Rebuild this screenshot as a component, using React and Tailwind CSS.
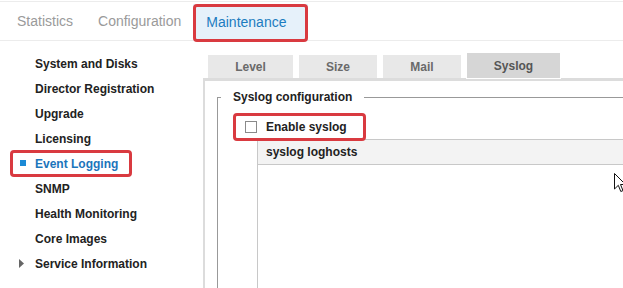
import React from "react";

const RED = "border-[#d93a40]";

const sideItems = [
  "System and Disks",
  "Director Registration",
  "Upgrade",
  "Licensing",
  "Event Logging",
  "SNMP",
  "Health Monitoring",
  "Core Images",
  "Service Information",
];

const tabs = [
  { label: "Level", w: "w-[85px]" },
  { label: "Size", w: "w-[78px]" },
  { label: "Mail", w: "w-[78px]" },
  { label: "Syslog", w: "w-[93px]", active: true },
];

export default function App() {
  return (
    <div
      className="relative w-[623px] h-[288px] overflow-hidden bg-white text-[#222]"
      style={{ fontFamily: '"Liberation Sans", Arial, sans-serif' }}
    >
      {/* top navigation */}
      <div className="mt-[1px] h-[40px] border-t border-b border-[#ececec] flex pl-[5px]">
        <div className="flex items-center px-3 text-[14px] text-[#9a9a9a]">Statistics</div>
        <div className="flex items-center pl-[13px] pr-3 text-[14px] text-[#9a9a9a]">Configuration</div>
        <div className="relative mt-[2px] flex items-center bg-[#e6f1fa] pl-[13px] pr-[22px] text-[14px] text-[#1b7cc0]">
          Maintenance
          <span className={`absolute inset-0 -bottom-[2px] rounded-[4px] border-[3px] ${RED}`} />
        </div>
      </div>

      <div className="flex">
        {/* sidebar */}
        <div className="w-[203px] shrink-0 pt-[10px]">
          {sideItems.map((it) => {
            const active = it === "Event Logging";
            const expand = it === "Service Information";
            return (
              <div key={it} className="relative h-[25px] flex items-center pl-[35px] text-[12px] font-bold">
                {active && (
                  <>
                    <span className="absolute left-[20px] top-[9px] w-[6px] h-[6px] bg-[#1c8ad6]" />
                    <span className={`absolute left-[10px] -top-[1px] w-[122px] h-[27px] rounded-[4px] border-[3px] ${RED}`} />
                  </>
                )}
                {expand && (
                  <svg className="absolute left-[19px] top-[8px]" width="5" height="9" viewBox="0 0 5 9">
                    <path d="M0 0 L5 4.5 L0 9 Z" fill="#666" />
                  </svg>
                )}
                <span className={active ? "text-[#1b75bb]" : "text-[#222]"}>{it}</span>
              </div>
            );
          })}
        </div>

        {/* content */}
        <div className="flex-1 pt-[14px]">
          <div className="flex gap-[6px] pl-[5px] h-[23px] items-end">
            {tabs.map((t) => (
              <div
                key={t.label}
                className={`${t.w} flex items-center justify-center text-[12px] font-bold ${
                  t.active
                    ? "h-[25px] bg-[#d6d6d6] text-[#555] outline outline-1 outline-white"
                    : "h-[23px] bg-[#e8e8e8] text-[#6a6a6a]"
                }`}
              >
                {t.label}
              </div>
            ))}
          </div>
          <div className="border-t-[3px] border-l-[2px] border-[#dcdcdc] h-[220px] pl-[12px] pt-[9px]">
            <fieldset className="w-[600px] h-[260px] border border-[#999]">
              <legend className="ml-[3px] px-3 text-[12px] font-bold leading-[14px] text-[#222]">
                Syslog configuration
              </legend>
              <div className="pl-[27px]">
                <div className="relative mt-[13px] h-[20px] flex items-center gap-[9px] w-fit">
                  <span className="w-[12px] h-[12px] border border-[#8a8a8a] bg-white" />
                  <span className="text-[12px] font-bold text-[#222]">Enable syslog</span>
                  <span className={`absolute -left-[12px] -top-[4px] -right-[19px] -bottom-[4px] rounded-[4px] border-[3px] ${RED}`} />
                </div>
                <div className="ml-[12px] mt-[2px] border-l border-t border-[#c8c8c8] h-[200px]">
                  <div className="h-[25px] bg-[#f3f3f3] border-b border-[#c8c8c8] flex items-center pl-2 text-[12px] font-bold text-[#222]">
                    syslog loghosts
                  </div>
                </div>
              </div>
            </fieldset>
          </div>
        </div>
      </div>

      {/* mouse cursor */}
      <svg className="absolute left-[614px] top-[173px]" width="12" height="20" viewBox="0 0 12 20">
        <path d="M0.5 0.5 L0.5 16 L4.3 12.3 L6.8 18.5 L9 17.6 L6.5 11.5 L11.5 11.5 Z" fill="#fff" stroke="#111" strokeWidth="1" strokeLinejoin="miter" />
      </svg>
    </div>
  );
}
